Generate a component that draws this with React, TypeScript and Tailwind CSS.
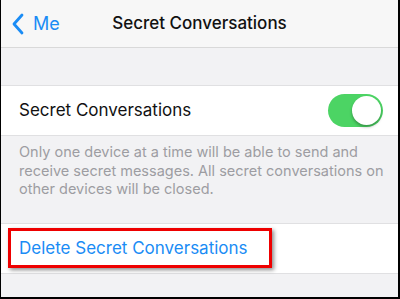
import React from "react";

export default function App() {
  const font = { fontFamily: "Inter, 'Noto Sans', sans-serif" } as React.CSSProperties;
  return (
    <div className="w-[400px] h-[299px] overflow-hidden border-l border-r-[2px] border-b-[2px] border-black bg-[#f2f2f4] flex flex-col" style={font}>
      <div className="h-[48px] shrink-0 bg-[#f7f7f7] border-b border-[#d9d9d9] flex items-center relative">
        <div className="flex items-center pl-[10px] text-[#1a8cf5]">
          <svg width="14" height="22" viewBox="0 0 14 22" className="mr-[8px]">
            <path d="M11 2 L3 11 L11 20" fill="none" stroke="#1a8cf5" strokeWidth="2.8" strokeLinecap="round" strokeLinejoin="round" />
          </svg>
          <span className="text-[18px] leading-none">Me</span>
        </div>
        <div className="absolute inset-0 flex items-center justify-center pointer-events-none">
          <span className="text-[17px] font-medium text-[#111]">Secret Conversations</span>
        </div>
      </div>
      <div className="h-[37px] shrink-0" />
      <div className="h-[51px] shrink-0 bg-white border-t border-b border-[#e0e0e2] flex items-center justify-between pl-[18px] pr-[15px]">
        <span className="text-[17px] text-[#111]">Secret Conversations</span>
        <div className="w-[55px] h-[33px] rounded-full bg-[#4cd464] relative">
          <div className="absolute right-[2px] top-[2px] w-[29px] h-[29px] rounded-full bg-white shadow-[0_2px_3px_rgba(0,0,0,0.3)]" />
        </div>
      </div>
      <div className="h-[87px] shrink-0 pl-[18px] pr-[6px] pt-[7px] text-[14.5px] leading-[18.5px] text-[#9d9da2]">
        Only one device at a time will be able to send and receive secret messages. All secret conversations on other devices will be closed.
      </div>
      <div className="h-[51px] shrink-0 bg-white border-t border-b border-[#e0e0e2] flex items-center relative">
        <span className="pl-[18px] text-[17px] text-[#1a8cf5]">Delete Secret Conversations</span>
        <div className="absolute left-[7px] top-[4px] w-[264px] h-[40px] border-[3px] border-[#ee0000] shadow-[2px_2px_4px_rgba(0,0,0,0.45)]" />
      </div>
      <div className="flex-1" />
    </div>
  );
}
